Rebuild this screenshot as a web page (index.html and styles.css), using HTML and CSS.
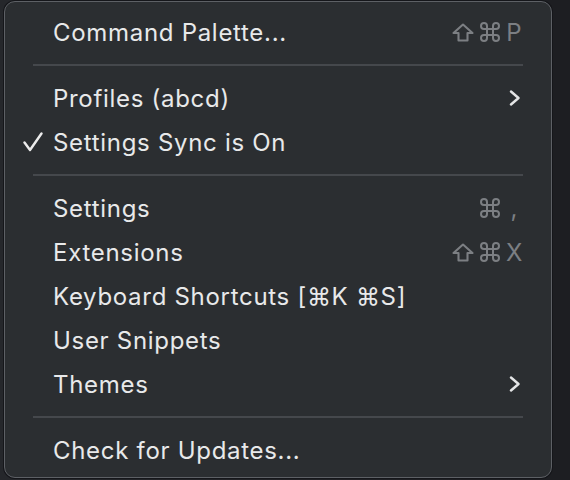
FILE: index.html
```html
<!DOCTYPE html>
<html>
<head>
<meta charset="utf-8">
<link rel="stylesheet" href="styles.css">
</head>
<body>
<div class="menu">
  <div class="item">
    <span class="check"></span>
    <span class="label">Command Palette...</span>
    <span class="shortcut">
      <span class="slot shift"><svg width="22" height="19" viewBox="0 0 22 19"><path d="M11 1.5 L20.5 10 H15.5 V17.5 H6.5 V10 H1.5 Z" fill="none" stroke="currentColor" stroke-width="2.1" stroke-linejoin="round"/></svg></span>
      <span class="slot cmd"><svg width="24" height="24" viewBox="0 0 24 24"><path d="M15 6v12a3 3 0 1 0 3-3H6a3 3 0 1 0 3 3V6a3 3 0 1 0-3 3h12a3 3 0 1 0-3-3" fill="none" stroke="currentColor" stroke-width="2"/></svg></span>
      <span class="key">P</span>
    </span>
  </div>
  <div class="sep"></div>
  <div class="item">
    <span class="check"></span>
    <span class="label">Profiles (abcd)</span>
    <span class="chev"><svg width="12" height="16" viewBox="0 0 12 16"><path d="M2 1.5 L9.5 8 L2 14.5" fill="none" stroke="currentColor" stroke-width="2.4" stroke-linecap="round" stroke-linejoin="round"/></svg></span>
  </div>
  <div class="item">
    <span class="check"><svg width="20" height="20" viewBox="0 0 20 20"><path d="M1.5 10.5 L7 18 L18.5 1.5" fill="none" stroke="currentColor" stroke-width="2.4" stroke-linecap="round" stroke-linejoin="round"/></svg></span>
    <span class="label">Settings Sync is On</span>
  </div>
  <div class="sep"></div>
  <div class="item">
    <span class="check"></span>
    <span class="label">Settings</span>
    <span class="shortcut">
      <span class="slot shift"></span>
      <span class="slot cmd"><svg width="24" height="24" viewBox="0 0 24 24"><path d="M15 6v12a3 3 0 1 0 3-3H6a3 3 0 1 0 3 3V6a3 3 0 1 0-3 3h12a3 3 0 1 0-3-3" fill="none" stroke="currentColor" stroke-width="2"/></svg></span>
      <span class="key">,</span>
    </span>
  </div>
  <div class="item">
    <span class="check"></span>
    <span class="label">Extensions</span>
    <span class="shortcut">
      <span class="slot shift"><svg width="22" height="19" viewBox="0 0 22 19"><path d="M11 1.5 L20.5 10 H15.5 V17.5 H6.5 V10 H1.5 Z" fill="none" stroke="currentColor" stroke-width="2.1" stroke-linejoin="round"/></svg></span>
      <span class="slot cmd"><svg width="24" height="24" viewBox="0 0 24 24"><path d="M15 6v12a3 3 0 1 0 3-3H6a3 3 0 1 0 3 3V6a3 3 0 1 0-3 3h12a3 3 0 1 0-3-3" fill="none" stroke="currentColor" stroke-width="2"/></svg></span>
      <span class="key">X</span>
    </span>
  </div>
  <div class="item">
    <span class="check"></span>
    <span class="label">Keyboard Shortcuts [⌘K ⌘S]</span>
  </div>
  <div class="item">
    <span class="check"></span>
    <span class="label">User Snippets</span>
  </div>
  <div class="item">
    <span class="check"></span>
    <span class="label">Themes</span>
    <span class="chev"><svg width="12" height="16" viewBox="0 0 12 16"><path d="M2 1.5 L9.5 8 L2 14.5" fill="none" stroke="currentColor" stroke-width="2.4" stroke-linecap="round" stroke-linejoin="round"/></svg></span>
  </div>
  <div class="sep"></div>
  <div class="item">
    <span class="check"></span>
    <span class="label">Check for Updates...</span>
  </div>
</div>
</body>
</html>
```

FILE: styles.css
```css
html, body {
  margin: 0;
  padding: 0;
  width: 570px;
  height: 480px;
  overflow: hidden;
  background: linear-gradient(to right, #25272b 0, #25272b 10px, #1d1e22 540px);
  font-family: "Inter", "DejaVu Sans", sans-serif;
}

.menu {
  box-sizing: border-box;
  margin: 1px 0 0 4px;
  width: 548px;
  height: 477px;
  background: #2b2e31;
  border: 1px solid #5d6065;
  border-radius: 11px;
  box-shadow: 0 0 0 1px #15161a;
  padding: 8px 29px 0 16px;
  display: flex;
  flex-direction: column;
}

.item {
  height: 44px;
  display: flex;
  align-items: center;
  color: #e8e9ea;
  font-size: 24px;
  letter-spacing: 0.7px;
}

.check {
  width: 32px;
  flex: none;
  display: flex;
  align-items: center;
  color: #ececec;
}

.check svg {
  margin-left: 2px;
  margin-top: -1px;
}

.label {
  flex: 1;
  white-space: nowrap;
}

.shortcut {
  display: flex;
  align-items: center;
  color: #7c7f83;
  letter-spacing: 0;
}

.slot {
  display: flex;
  align-items: center;
  justify-content: center;
}

.shift {
  width: 22px;
  margin-right: 4px;
}

.cmd {
  width: 24px;
  margin-right: 4px;
}

.key {
  width: 16px;
  text-align: center;
  font-size: 24px;
}

.chev {
  display: flex;
  align-items: center;
  color: #e4e5e6;
  margin-right: 1px;
}

.sep {
  height: 22px;
  display: flex;
  align-items: center;
  margin-left: 12px;
  margin-right: -1px;
}

.sep::before {
  content: "";
  flex: 1;
  height: 2px;
  background: #45484c;
}
```
